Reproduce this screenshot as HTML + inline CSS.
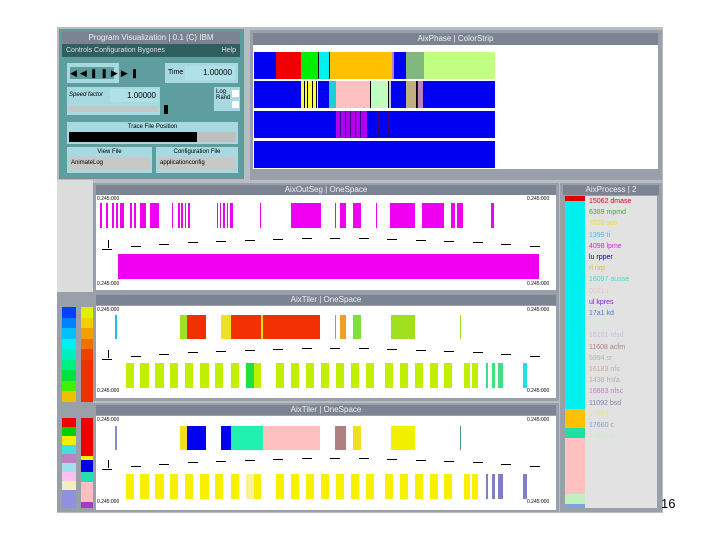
<!DOCTYPE html><html><head><meta charset="utf-8"><style>
body{margin:0;width:720px;height:540px;background:#fff;position:relative;overflow:hidden;font-family:"Liberation Sans",sans-serif}
div{position:absolute;box-sizing:border-box}
.tb{background:#7c8494;color:#eee;font-size:8px;text-align:center;line-height:11px}
.w{background:#fff}
.t{font-size:7px;white-space:nowrap}
</style></head><body>
<div style="left:57px;top:27px;width:606px;height:486px;background:#b8bcc4"></div>
<div style="left:57px;top:180px;width:36px;height:112px;background:#dcdcdc"></div>
<div style="left:59px;top:29px;width:185px;height:150px;background:#5f9ea0;border:1px solid #888"></div>
<div class="tb" style="left:62px;top:32px;width:178px;height:12px">Program Visualization | 0.1 (C) IBM</div>
<div style="left:62px;top:44px;width:178px;height:13px;background:#2f5f5f;color:#dde;font-size:7px;line-height:13px;padding-left:4px">Controls Configuration Bygones<span style="position:absolute;right:4px">Help</span></div>
<div style="left:67px;top:63px;width:52px;height:20px;background:#a8d8e0"></div>
<div style="left:70px;top:67px;width:44px;height:12px;background:#5f9ea0;color:#000;font-size:9px;line-height:12px;letter-spacing:3px">◀◀❚❚▶▶❚</div>
<div style="left:165px;top:63px;width:73px;height:20px;background:#a8d8e0;font-size:7px;line-height:20px;padding-left:3px">Time</div>
<div style="left:185px;top:66px;width:50px;height:14px;background:#b0e0e8;font-size:8px;text-align:right;line-height:14px;padding-right:3px">1.00000</div>
<div style="left:67px;top:87px;width:93px;height:28px;background:#a8d8e0;font-size:6px;padding:5px 2px;font-style:italic">Speed factor</div>
<div style="left:110px;top:89px;width:48px;height:13px;background:#b0e0e8;font-size:8px;text-align:right;line-height:13px;padding-right:2px">1.00000</div>
<div style="left:68px;top:106px;width:90px;height:6px;background:#c0c8c8"></div>
<div style="left:164px;top:105px;width:4px;height:9px;background:#000"></div>
<div style="left:214px;top:87px;width:26px;height:24px;background:#a8d8e0;font-size:6px;padding:2px">Log<br>Rand</div>
<div style="left:232px;top:90px;width:7px;height:7px;background:#fff"></div>
<div style="left:232px;top:101px;width:7px;height:7px;background:#fff"></div>
<div style="left:67px;top:122px;width:171px;height:22px;background:#a8d8e0;font-size:6px;text-align:center;line-height:10px">Trace File Position</div>
<div style="left:69px;top:132px;width:167px;height:10px;background:#c0c0c0"></div>
<div style="left:69px;top:132px;width:128px;height:10px;background:#000"></div>
<div style="left:67px;top:147px;width:85px;height:26px;background:#a8d8e0;font-size:6px;text-align:center;line-height:10px">View File</div>
<div style="left:69px;top:157px;width:81px;height:13px;background:#c8c8c8;font-size:6px;line-height:13px;padding-left:2px">AnimateLog</div>
<div style="left:156px;top:147px;width:82px;height:26px;background:#a8d8e0;font-size:6px;text-align:center;line-height:10px">Configuration File</div>
<div style="left:158px;top:157px;width:78px;height:13px;background:#c8c8c8;font-size:6px;line-height:13px;padding-left:2px">applicationconfig</div>
<div style="left:250px;top:30px;width:412px;height:150px;background:#9aa0aa"></div>
<div class="tb" style="left:253px;top:33px;width:405px;height:12px">AixPhase | ColorStrip</div>
<div class="w" style="left:253px;top:45px;width:405px;height:124px"></div>
<div style="left:93px;top:183px;width:466px;height:110px;background:#9aa0aa"></div>
<div class="tb" style="left:96px;top:185px;width:460px;height:10px;line-height:10px">AixOutSeg | OneSpace</div>
<div class="w" style="left:96px;top:195px;width:460px;height:95px"></div>
<div style="left:93px;top:293px;width:466px;height:108px;background:#9aa0aa"></div>
<div class="tb" style="left:96px;top:295px;width:460px;height:10px;line-height:10px">AixTiler | OneSpace</div>
<div class="w" style="left:96px;top:306px;width:460px;height:92px"></div>
<div style="left:93px;top:403px;width:466px;height:109px;background:#9aa0aa"></div>
<div class="tb" style="left:96px;top:405px;width:460px;height:10px;line-height:10px">AixTiler | OneSpace</div>
<div class="w" style="left:96px;top:416px;width:460px;height:94px"></div>
<div style="left:57px;top:292px;width:36px;height:220px;background:#9aa0aa"></div>
<div style="left:560px;top:183px;width:102px;height:329px;background:#9aa0aa"></div>
<div class="tb" style="left:563px;top:185px;width:96px;height:10px;line-height:10px">AixProcess | 2</div>
<div style="left:585px;top:196px;width:72px;height:312px;background:#e2e2e2"></div>
<div style="left:661px;top:496px;font-size:13px">16</div>
<script>
function R(x,y,w,h,c){var d=document.createElement('div');d.style.cssText='left:'+x+'px;top:'+y+'px;width:'+w+'px;height:'+h+'px;background:'+c;document.body.appendChild(d);}
[52,81,111,141].forEach(function(y){R(254,y,241,27,'#0000f0');});
[[276,301,'#f00000'],[301,318,'#00ee00'],[318,329,'#00f0f0'],[330,392,'#ffc000'],[406,424,'#80b880'],[424,495,'#c0ff80']].forEach(function(s){R(s[0],52,s[1]-s[0],27,s[2]);});
R(318,52,1,27,'#000');R(392,52,2,27,'#c080c0');
[[301,318,'#ffff40'],[329,336,'#20d0d0'],[336,370,'#ffc0c0'],[370,388,'#c0ffc0'],[388,391,'#c0c0ff'],[406,416,'#c0b080'],[418,423,'#c080c0']].forEach(function(s){R(s[0],81,s[1]-s[0],27,s[2]);});
[304,307,312,316,370,388,416].forEach(function(x){R(x,81,1,27,'#000');});
R(336,111,31,27,'#b000f0');[340,345,350,355,360,378,388].forEach(function(x){R(x,111,1,27,'#400080');});
function X(z){return 55+z/2.53;}
function B(list,y,h,c){list.forEach(function(s){var a=X(s[0]),b=X(s[1]);R(a,y,Math.max(1,b-a),h,s[2]||c);});}
B([[115,120],[130,135],[145,150],[155,160],[165,175],[190,195],[200,205],[215,230],[240,262],[295,299],[312,316],[320,324],[328,332],[336,342],[410,413],[418,421],[426,430],[434,438],[444,450],[518,521],[597,672],[708,712],[722,737],[755,775],[812,814],[847,912],[928,985],[1002,1012],[1018,1033],[1103,1110]],203,25,'#f000f0');
B([[160,1225]],254,25,'#f000f0');
B([[152,158,'#20c0e0'],[315,335,'#a0e020'],[335,382,'#f03000'],[420,445,'#f0e020'],[445,520,'#f03000'],[520,527,'#f0e020'],[527,670,'#f03000'],[708,712,'#20d0c0'],[722,737,'#f0a020'],[755,775,'#80e040'],[850,910,'#a0e020'],[1025,1027,'#a0e020']],315,24);
var bot=[[180,200],[215,237],[252,275],[292,312],[330,350],[368,390],[405,425],[445,465],[483,503],[503,520],[560,580],[597,617],[635,655],[672,692],[710,730],[748,768],[787,807],[835,855],[872,892],[910,930],[948,968],[985,1005],[1035,1050],[1055,1070],[1090,1096],[1105,1112],[1120,1133],[1185,1193]];
B(bot.map(function(s,i){var c='#c0f000';if(i==8)c='#20e040';if(i>=24)c='#40e080';if(i==27)c='#20e0e0';return [s[0],s[1],c];}),363,25);
B([[152,158,'#8090d0'],[315,335,'#f0e020'],[335,382,'#0000f0'],[420,445,'#0000f0'],[445,527,'#20f0b0'],[527,670,'#ffc0c0'],[708,737,'#b08080'],[755,775,'#f0e020'],[850,910,'#f0f000'],[1025,1027,'#40a080']],426,24);
B(bot.map(function(s,i){var c='#f8f000';if(i==8)c='#fff0a0';if(i>=24)c='#8080c0';return [s[0],s[1],c];}),474,25);
[246,356,466].forEach(function(base){for(var i=0;i<16;i++){var x=102+i*28.5;var t=(x-330)/230;R(x,base-8+Math.round(11*t*t),10,1,'#000');}R(108,base-6,1,8,'#000');});
var g1=['#0040ff','#0080ff','#00c0ff','#00f0f0','#00f0c0','#00f080','#00e040','#40f000','#f0c000'];g1.forEach(function(c,i){R(62,307+i*10.5,14,11,c);});
var g2=['#e0f000','#f0d000','#f0a000','#f07000','#f04000','#f03000','#f03000','#f03000','#f03000'];g2.forEach(function(c,i){R(81,307+i*10.5,12,11,c);});
var g3=['#f00000','#00d000','#f0f000','#40e0e0','#c080c0','#a0e0f0','#ffc0f0','#f0f0c0','#9090e0','#9090e0'];g3.forEach(function(c,i){R(62,418+i*9,14,9,c);});
R(81,418,12,38,'#f00000');R(81,456,12,4,'#f0f000');R(81,460,12,12,'#0000e0');R(81,472,12,10,'#20e0b0');R(81,482,12,20,'#ffc0c0');R(81,502,12,6,'#a040c0');
R(565,196,20,5,'#e00000');R(565,201,20,208,'#00f0f0');R(565,409,20,19,'#ffc000');R(565,428,20,10,'#20e0a0');R(565,438,20,56,'#ffc0c0');R(565,494,20,10,'#c0f0c0');R(565,504,20,4,'#80a0e0');
var L=[['15062 dmase','#e00020'],['6389 mpmd','#20c020'],['7020 sco','#f0e020'],['1399 ti','#40c0e0'],['4098 lpme','#e020e0'],['lu rpper','#000090'],['rl nrp','#e0c020'],['16097 ausse','#40e0c0'],['0021 i','#f0c0c0'],['ul kpres','#8020e0'],['17a1 kd','#4080e0'],['17000','#d0f0d0'],['16101 nfsd','#c0c0e0'],['11608 acfm','#b08080'],['5994 sr','#a0c0a0'],['16183 nfs','#c0b0a0'],['1438 hsfa','#b0b0b0'],['16883 nfsc','#c080c0'],['11092 bsd','#8080b0'],['16604','#e0f060'],['17660 c','#80a0e0'],['17666 d','#c0f0c0']];
L.forEach(function(l,i){var d=document.createElement('div');d.className='t';d.style.cssText='left:589px;top:'+(198+i*11.2)+'px;color:'+l[1];d.textContent=l[0];document.body.appendChild(d);});
[[97,196],[97,281],[97,307],[97,388],[97,417],[97,499]].forEach(function(p){var d=document.createElement('div');d.className='t';d.style.cssText='left:'+p[0]+'px;top:'+p[1]+'px;font-size:5px';d.textContent='0.245:000';document.body.appendChild(d);var e=d.cloneNode(true);e.style.left='527px';document.body.appendChild(e);});
</script>
</body></html>
